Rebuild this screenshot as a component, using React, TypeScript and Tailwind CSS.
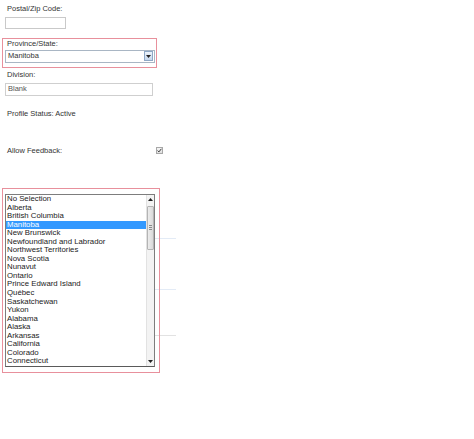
const PROVINCES = [
  'No Selection',
  'Alberta',
  'British Columbia',
  'Manitoba',
  'New Brunswick',
  'Newfoundland and Labrador',
  'Northwest Territories',
  'Nova Scotia',
  'Nunavut',
  'Ontario',
  'Prince Edward Island',
  'Québec',
  'Saskatchewan',
  'Yukon',
  'Alabama',
  'Alaska',
  'Arkansas',
  'California',
  'Colorado',
  'Connecticut',
];

function Label({ children }: { children: React.ReactNode }) {
  return <div className="h-[10px] pl-[7px] text-[7.5px] leading-[10px] text-[#333]">{children}</div>;
}

function Arrow({ up }: { up?: boolean }) {
  return (
    <svg width="5" height="3" viewBox="0 0 5 3" className="block">
      <path d={up ? 'M0 3 L2.5 0 L5 3 Z' : 'M0 0 L5 0 L2.5 3 Z'} fill="#222" />
    </svg>
  );
}

export default function App() {
  const selected = 'Manitoba';

  return (
    <div className="min-h-[439px] w-[474px] bg-white font-['Liberation_Sans',Arial,sans-serif]">
      {/* Postal */}
      <div className="pt-[4px]">
        <Label>Postal/Zip Code:</Label>
        <div className="ml-[5px] mt-[2.5px] h-[12px] w-[61px] border border-[#c9c9c9] bg-white" />
      </div>

      {/* Province select */}
      <div className="ml-[2px] mt-[9px] w-[155px] border border-[#e8909c] pb-[4.5px] pl-[2px]">
        <div className="h-[10px] pl-[2px] text-[7.5px] leading-[10px] text-[#333]">Province/State:</div>
        <div className="mt-[1.5px] flex h-[12.5px] w-[149.5px] items-center border border-[#a9b6c4] bg-white">
          <span className="flex-1 pl-[2px] text-[7.5px] leading-[10px] text-[#333]">Manitoba</span>
          <div className="mr-[0.5px] flex h-[10px] w-[9.5px] items-center justify-center border border-[#8fa8c6] bg-gradient-to-b from-[#eef4fb] to-[#c5d7ee]">
            <Arrow />
          </div>
        </div>
      </div>

      {/* Division */}
      <div className="mt-[2px]">
        <Label>Division:</Label>
        <div className="ml-[5px] mt-[3.3px] flex h-[12.4px] w-[147.5px] items-center border border-[#cfcfcf] bg-white pl-[2px] text-[7.5px] leading-[10px] text-[#555]">
          Blank
        </div>
      </div>

      {/* Profile status */}
      <div className="mt-[13.8px]">
        <Label>Profile Status: Active</Label>
      </div>

      {/* Allow feedback */}
      <div className="mt-[26.5px] flex items-center">
        <div className="w-[156px]">
          <Label>Allow Feedback:</Label>
        </div>
        <div className="flex h-[7px] w-[7px] items-center justify-center border border-[#a8a8a8] bg-gradient-to-b from-[#f6f6f6] to-[#dedede]">
          <svg width="5" height="5" viewBox="0 0 5 5" className="block">
            <path d="M0.6 2.6 L1.9 3.9 L4.4 0.8" fill="none" stroke="#3a3a3a" strokeWidth="1" />
          </svg>
        </div>
      </div>

      {/* Province list */}
      <div className="relative mt-[32.5px]">
        <div className="absolute left-[155px] top-[50px] h-px w-[21px] bg-[#e3ebf6]" />
        <div className="absolute left-[155px] top-[101px] h-px w-[21px] bg-[#e3ebf6]" />
        <div className="absolute left-[155px] top-[147px] h-px w-[21px] bg-[#e2e2e2]" />
        <div className="relative ml-[2px] w-[158px] border border-[#e8909c] pb-[4.5px] pl-[2px] pt-[4.5px]">
          <div className="flex h-[173.5px] w-[150px] border border-[#7d7d7d] border-b-[#5a5a5a] bg-white">
            <div className="flex-1 overflow-hidden">
              {PROVINCES.map((p) => (
                <div
                  key={p}
                  className={
                    p === selected
                      ? 'h-[8.55px] truncate bg-[#3399ff] pl-[1px] text-[7.8px] leading-[8.55px] text-white'
                      : 'h-[8.55px] truncate pl-[1px] text-[7.8px] leading-[8.55px] text-[#222]'
                  }
                >
                  {p}
                </div>
              ))}
            </div>
            {/* scrollbar */}
            <div className="flex w-[8.5px] flex-col items-center border-l border-[#e2e2e2] bg-[#f3f3f3]">
              <div className="flex h-[8px] items-center justify-center pt-[1px]">
                <Arrow up />
              </div>
              <div className="mt-[3px] flex h-[44px] w-[7px] items-center justify-center rounded-[1px] border border-[#b4b4b4] bg-gradient-to-r from-[#ececec] to-[#d9d9d9]">
                <div className="flex flex-col gap-[1px]">
                  <div className="h-px w-[3px] bg-[#8a8a8a]" />
                  <div className="h-px w-[3px] bg-[#8a8a8a]" />
                  <div className="h-px w-[3px] bg-[#8a8a8a]" />
                </div>
              </div>
              <div className="flex-1" />
              <div className="flex h-[8px] items-center justify-center pb-[1px]">
                <Arrow />
              </div>
            </div>
          </div>
        </div>
      </div>
    </div>
  );
}
